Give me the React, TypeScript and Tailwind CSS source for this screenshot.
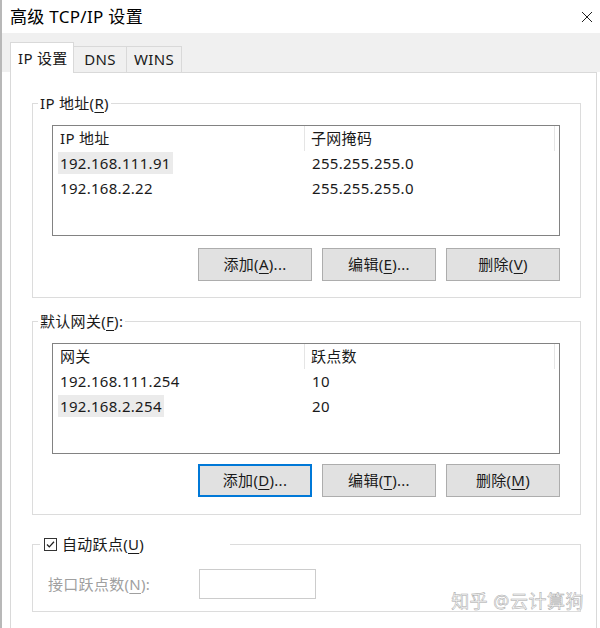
import React from 'react';

const Key = ({ k }: { k: string }) => <span className="underline underline-offset-[3px] decoration-1">{k}</span>;

type Col = { head: string; rows: string[] };

const ListBox = ({ left, right, hi }: { left: Col; right: Col; hi: number }) => (
  <div className="h-[111px] border border-[#828282] bg-white">
    <div className="flex h-[25px] items-center">
      <div className="w-[252px] h-full pl-[7px] flex items-center border-r border-[#e5e5e5]">{left.head}</div>
      <div className="w-[250px] h-full pl-[6px] flex items-center border-r border-[#e5e5e5]">{right.head}</div>
    </div>
    {left.rows.map((r, i) => (
      <div key={r} className="flex h-[25px] items-center">
        <div className="w-[252px] pl-[5px]">
          <span className={'inline-block h-[22px] leading-[22px] px-[2px] ' + (i === hi ? 'bg-[#ebebeb]' : '')}>{r}</span>
        </div>
        <div className="pl-[7px]">{right.rows[i]}</div>
      </div>
    ))}
  </div>
);

const Btn = ({ label, k, dots, focus }: { label: string; k: string; dots?: boolean; focus?: boolean }) => (
  <button
    className={
      'w-[114px] h-[33px] bg-[#e1e1e1] flex items-center justify-center text-[15px] text-[#1a1a1a] tracking-[0.3px] ' +
      (focus ? 'border-2 border-[#0078d7]' : 'border border-[#adadad]')
    }
  >
    {label}(<Key k={k} />){dots ? '...' : ''}
  </button>
);

const BtnRow = ({ keys, focus }: { keys: string[]; focus?: boolean }) => (
  <div className="flex justify-end gap-[10px]">
    <Btn label="添加" k={keys[0]} dots focus={focus} />
    <Btn label="编辑" k={keys[1]} dots />
    <Btn label="删除" k={keys[2]} />
  </div>
);

export default function App() {
  return (
    <div
      className="w-[600px] h-[628px] bg-white border-l-2 border-[#b8b8b8] relative overflow-hidden text-[15px] tracking-[0.3px] text-[#1a1a1a]"
      style={{ fontFamily: '"Noto Sans", "Noto Sans CJK SC", sans-serif' }}
    >
      {/* title bar */}
      <div className="h-[33px] flex items-center justify-between pl-[8px] pr-[7px]">
        <span className="text-[17px] text-black">高级 TCP/IP 设置</span>
        <svg width="12" height="12" viewBox="0 0 12 12" stroke="#222" strokeWidth="1">
          <path d="M1 1l10 10M11 1L1 11" />
        </svg>
      </div>

      {/* tab strip */}
      <div className="h-[39px] bg-[#f0f0f0] flex items-end pl-[8px]">
        <div className="relative z-10 -mb-px w-[64px] h-[31px] bg-white border border-b-0 border-[#d9d9d9] flex items-center pl-[7px]">
          IP 设置
        </div>
        <div className="w-[53px] h-[26px] border border-l-0 border-b-0 border-[#d9d9d9] flex items-center justify-center">DNS</div>
        <div className="w-[55px] h-[26px] border border-l-0 border-b-0 border-[#d9d9d9] flex items-center justify-center">WINS</div>
      </div>

      {/* panel */}
      <div className="ml-[8px] w-[587px] h-[580px] border border-[#d9d9d9] bg-white pt-[20px] pl-[21px]">
        <fieldset className="w-[549px] border border-[#dcdcdc]">
          <legend className="ml-[5px] px-[2px] h-[20px] leading-[20px]">
            IP 地址(<Key k="R" />)
          </legend>
          <div className="pl-[19px] pr-[20px] pt-[12px] pb-[16px]">
            <ListBox
              left={{ head: 'IP 地址', rows: ['192.168.111.91', '192.168.2.22'] }}
              right={{ head: '子网掩码', rows: ['255.255.255.0', '255.255.255.0'] }}
              hi={0}
            />
            <div className="mt-[12px]">
              <BtnRow keys={['A', 'E', 'V']} />
            </div>
          </div>
        </fieldset>

        <fieldset className="mt-[13px] w-[549px] border border-[#dcdcdc]">
          <legend className="ml-[5px] px-[2px] h-[20px] leading-[20px]">
            默认网关(<Key k="F" />):
          </legend>
          <div className="pl-[19px] pr-[20px] pt-[12px] pb-[17px]">
            <ListBox
              left={{ head: '网关', rows: ['192.168.111.254', '192.168.2.254'] }}
              right={{ head: '跃点数', rows: ['10', '20'] }}
              hi={1}
            />
            <div className="mt-[10px]">
              <BtnRow keys={['D', 'T', 'M']} focus />
            </div>
          </div>
        </fieldset>

        <fieldset className="mt-[19px] w-[549px] border border-[#dcdcdc]">
          <legend className="ml-[7px] pl-[4px] w-[190px] h-[20px] flex items-center gap-[5px]">
            <span className="w-[13px] h-[13px] border border-[#333] flex items-center justify-center">
              <svg width="11" height="11" viewBox="0 0 11 11" fill="none" stroke="#222" strokeWidth="1.3">
                <path d="M2 5.5l2.3 2.4L9 2.8" />
              </svg>
            </span>
            <span>
              自动跃点(<Key k="U" />)
            </span>
          </legend>
          <div className="pl-[15px] pt-[15px] pb-[12px] flex items-center">
            <span className="w-[151px] text-[#a0a0a0]">
              接口跃点数(<Key k="N" />):
            </span>
            <div className="w-[117px] h-[30px] border border-[#cccccc] bg-white" />
          </div>
        </fieldset>
      </div>

      {/* watermark */}
      <div className="absolute right-[16px] bottom-[13px] text-[18px] text-[#f8f8f8] [-webkit-text-stroke:0.5px_#a8a8a8] tracking-[0.5px]">
        知乎 @云计算狗
      </div>
    </div>
  );
}
